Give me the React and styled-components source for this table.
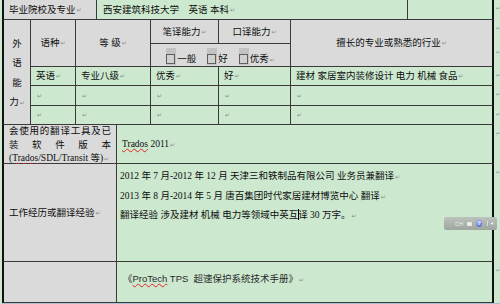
import React from "react";
import styled, { createGlobalStyle } from "styled-components";

const GlobalStyle = createGlobalStyle`
    html, body {
        margin: 0;
        padding: 0;
        background: #cce8cf;
    }
`

const Page = styled.div`
    position: relative;
    width: 500px;
    height: 304px;
    overflow: hidden;
    box-sizing: border-box;
    padding-left: 2px;
    background: #cce8cf;
    font-family: "Liberation Serif", "Noto Sans CJK SC", serif;
    font-size: 9.5px;
    color: #0e0e0e;
`

const Sheet = styled.div`
    display: grid;
    grid-template-columns: 29px 45px 21px 20px 34px 68px 72px 117px 86px 7px;
    grid-template-rows: 20px 24px 23px 19px 20px 19px 39px 98px 41px;
    border-bottom: 1px solid #a9bfcf;
    width: max-content;
`

const Cell = styled.div`
    grid-column: ${(p) => p.$c};
    grid-row: ${(p) => p.$r};
    box-sizing: border-box;
    min-width: 0;
    display: flex;
    align-items: ${(p) => (p.$top ? "flex-start" : "center")};
    justify-content: ${(p) => (p.$center ? "center" : "flex-start")};
    padding: ${(p) => p.$pad || "0 5px"};
    background: ${(p) => (p.$head ? "#dadada" : "#cce8cf")};
    border-bottom: 1px solid #3a3a3a;
    border-right: ${(p) => (p.$edge ? "2px solid #121212" : "1px solid #3a3a3a")};
    border-left: ${(p) => (p.$first ? "2px solid #121212" : "none")};
    white-space: nowrap;
    line-height: 12px;
`

const EolCell = styled.div`
    grid-column: 10;
    grid-row: ${(p) => p.$r};
    padding: 4px 0 0 1px;
    font-size: 5px;
`

const Mark = styled.span`
    font-family: "DejaVu Sans", sans-serif;
    font-size: ${(p) => p.$size || "6px"};
    line-height: 8px;
    color: #8c8c8c;
    margin-left: 1px;
`

const VLabel = styled.div`
    display: flex;
    flex-direction: column;
    align-items: center;
    padding-top: 3px;
    line-height: 19.4px;
`

const Stack = styled.div`
    width: 100%;
    line-height: ${(p) => p.$lh || "13.5px"};
    padding-top: ${(p) => p.$pt || "0"};
`

const JustLine = styled.div`
    text-align: justify;
    text-align-last: justify;
    white-space: normal;
`

const Checks = styled.div`
    display: flex;
    align-items: flex-end;
    gap: 11px;
    padding-top: 2px;
`

const CheckItem = styled.span`
    display: inline-flex;
    align-items: flex-end;
    gap: 1px;
`

const Shade = styled.span`
    display: inline-flex;
    align-items: flex-end;
    width: 10px;
    height: 17px;
    background: #c2c2c2;
`

const Box = styled.span`
    display: block;
    width: 9px;
    height: 10px;
    margin-bottom: 1px;
    box-sizing: border-box;
    border: 1px solid #5e5e5e;
    background: #d0d0d0;
`

const Spell = styled.span`
    text-decoration: underline wavy #e02424;
    text-decoration-thickness: 1px;
    text-underline-offset: 1px;
`

const Caret = styled.span`
    display: inline-block;
    width: 1px;
    height: 11px;
    margin: 0 -0.5px;
    vertical-align: -2px;
    background: #000;
`

const SansLine = styled.span`
    font-family: "Liberation Sans", "Noto Sans CJK SC", sans-serif;
    color: #2a2a2a;
`

const ImeBar = styled.div`
    position: absolute;
    left: 444px;
    top: 217px;
    width: 53px;
    height: 13px;
    box-sizing: border-box;
    padding: 0 3px 0 11px;
    display: flex;
    align-items: center;
    gap: 4px;
    border-radius: 2px;
    background: linear-gradient(#bcc2bd, #9ea69f);
    font-family: "Liberation Sans", sans-serif;
    font-size: 5.5px;
    color: #eef2ee;
`

const KeyIcon = styled.span`
    width: 7px;
    height: 4px;
    border-radius: 1px;
    background: #e9eeea;
`

const HelpIcon = styled.span`
    width: 7px;
    height: 7px;
    border-radius: 50%;
    background: radial-gradient(circle at 35% 35%, #a8b7ff, #4455c8);
    color: #fff;
    font-size: 5px;
    line-height: 7px;
    text-align: center;
    font-weight: bold;
`

const Drop = styled.span`
    margin-left: 1px;
    padding-left: 2px;
    border-left: 1px solid #d8ddd8;
    font-size: 4px;
    color: #fff;
`

const M = () => <Mark>↵</Mark>;

function CheckBoxItem({ label, last }) {
    return (
        <CheckItem>
            <Shade>
                <Box />
            </Shade>
            <span>
                {label}
                {last && <M />}
            </span>
        </CheckItem>
    );
}

const dataRows = [
    ["英语", "专业八级", "优秀", "好", "建材 家居室内装修设计  电力  机械  食品"],
    ["", "", "", "", ""],
    ["", "", "", "", ""],
];

function App() {
    return (
        <Page>
            <GlobalStyle />
            <Sheet>
                {/* school row */}
                <Cell $c="1 / 4" $r="1" $head $first>
                    毕业院校及专业<M />
                </Cell>
                <Cell $c="4 / 9" $r="1" $pad="0 6px">
                    西安建筑科技大学　英语 本科<M />
                </Cell>
                <Cell $c="9" $r="1" $edge />

                {/* language header */}
                <Cell $c="1" $r="2 / 7" $head $first $center $pad="0">
                    <VLabel>
                        <span>外</span>
                        <span>语</span>
                        <span>能</span>
                        <span>
                            力<M />
                        </span>
                    </VLabel>
                </Cell>
                <Cell $c="2" $r="2 / 4" $head $center>
                    语种<M />
                </Cell>
                <Cell $c="3 / 6" $r="2 / 4" $head $center>
                    等 级<M />
                </Cell>
                <Cell $c="6" $r="2" $head $center>
                    笔译能力<M />
                </Cell>
                <Cell $c="7" $r="2" $head $center>
                    口译能力<M />
                </Cell>
                <Cell $c="8 / 10" $r="2 / 4" $head $center $edge>
                    擅长的专业或熟悉的行业<M />
                </Cell>
                <Cell $c="6 / 8" $r="3" $head $center>
                    <Checks>
                        <CheckBoxItem label="一般" />
                        <CheckBoxItem label="好" />
                        <CheckBoxItem label="优秀" last />
                    </Checks>
                </Cell>

                {dataRows.map((row, i) => {
                    const r = String(4 + i);
                    return (
                        <React.Fragment key={r}>
                            <Cell $c="2" $r={r}>
                                {row[0]}
                                <M />
                            </Cell>
                            <Cell $c="3 / 6" $r={r}>
                                {row[1]}
                                <M />
                            </Cell>
                            <Cell $c="6" $r={r}>
                                {row[2]}
                                <M />
                            </Cell>
                            <Cell $c="7" $r={r}>
                                {row[3]}
                                <M />
                            </Cell>
                            <Cell $c="8 / 10" $r={r} $edge>
                                {row[4]}
                                <M />
                            </Cell>
                        </React.Fragment>
                    );
                })}

                {/* tools row */}
                <Cell $c="1 / 5" $r="7" $head $first $top $pad="0 5px">
                    <Stack>
                        <JustLine>会使用的翻译工具及已</JustLine>
                        <JustLine>装 软 件 版 本</JustLine>
                        <div>
                            (<Spell>Trados</Spell>/SDL/Transit 等)<M />
                        </div>
                    </Stack>
                </Cell>
                <Cell $c="5 / 10" $r="7" $edge>
                    <span>
                        <Spell>Trados</Spell> 2011<M />
                    </span>
                </Cell>

                {/* experience row */}
                <Cell $c="1 / 5" $r="8" $head $first>
                    工作经历或翻译经验<M />
                </Cell>
                <Cell $c="5 / 10" $r="8" $edge $top $pad="0 3px">
                    <Stack $lh="19.5px" $pt="3px">
                        <div>
                            2012 年 7 月-2012 年 12 月 天津三和铁制品有限公司 业务员兼翻译<M />
                        </div>
                        <div>
                            2013 年 8 月-2014 年 5 月 唐百集团时代家居建材博览中心 翻译<M />
                        </div>
                        <div>
                            翻译经验 涉及建材 机械 电力等领域中英互<Caret />译 30 万字。<M />
                        </div>
                    </Stack>
                </Cell>

                {/* document row */}
                <Cell $c="1 / 5" $r="9" $head $first />
                <Cell $c="5 / 10" $r="9" $edge $pad="0 6px 6px">
                    <SansLine>
                        《<Spell>ProTech</Spell> TPS&nbsp; 超速保护系统技术手册》<M />
                    </SansLine>
                </Cell>

                {[1, 2, 3, 4, 5, 6, 7, 8, 9].map((r) => (
                    <EolCell key={r} $r={String(r)}>
                        <Mark $size="5px">↵</Mark>
                    </EolCell>
                ))}
            </Sheet>

            <ImeBar>
                <span>CH</span>
                <KeyIcon />
                <HelpIcon>?</HelpIcon>
                <Drop>▼</Drop>
            </ImeBar>
        </Page>
    );
}

export default App;
